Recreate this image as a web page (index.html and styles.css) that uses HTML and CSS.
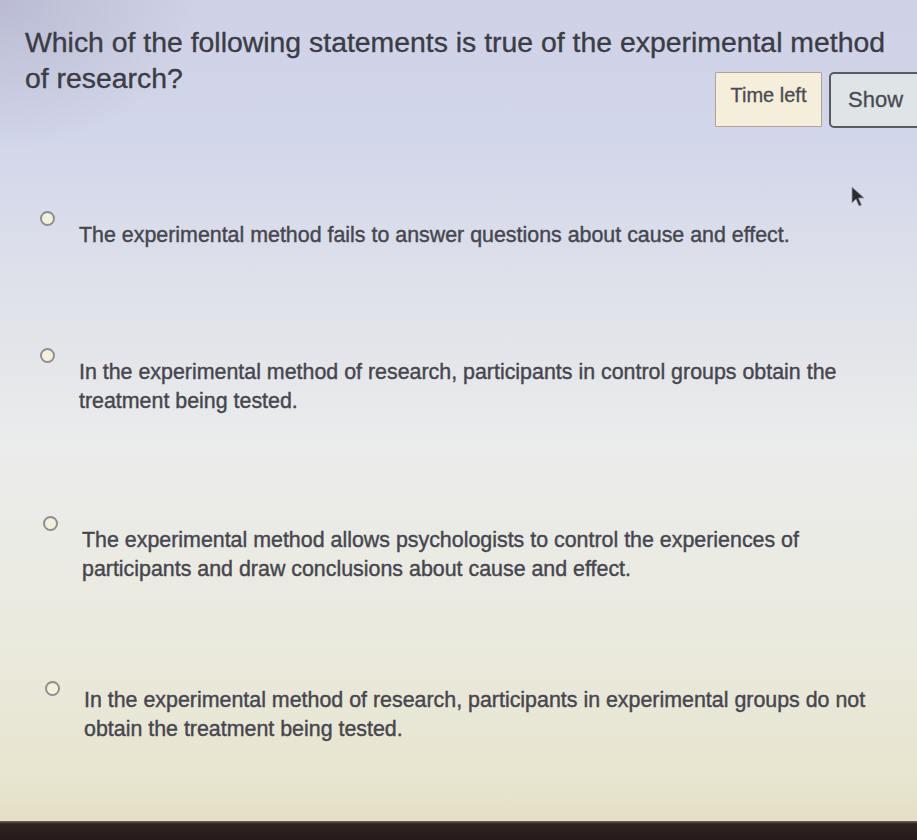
FILE: index.html
```html
<!DOCTYPE html>
<html lang="en">
<head>
<meta charset="utf-8">
<title>Question</title>
<link rel="stylesheet" href="styles.css">
</head>
<body>
<div class="screen">
  <main class="page">
    <header class="question">
      <h1 class="prompt"><span class="prompt-line prompt-line1">Which of the following statements is true of the experimental method</span> <span class="prompt-line prompt-line2">of research?</span></h1>
      <div class="toolbar">
        <button class="btn btn-time" type="button">Time left</button>
        <button class="btn btn-show" type="button">Show</button>
      </div>
    </header>
    <ul class="options">
      <li class="option">
        <span class="radio"></span>
        <span class="option-text">The experimental method fails to answer questions about cause and effect.</span>
      </li>
      <li class="option">
        <span class="radio"></span>
        <span class="option-text">In the experimental method of research, participants in control groups obtain the treatment being tested.</span>
      </li>
      <li class="option option-shift1">
        <span class="radio"></span>
        <span class="option-text">The experimental method allows psychologists to control the experiences of participants and draw conclusions about cause and effect.</span>
      </li>
      <li class="option option-shift2">
        <span class="radio"></span>
        <span class="option-text">In the experimental method of research, participants in experimental groups do not obtain the treatment being tested.</span>
      </li>
    </ul>
    <svg class="cursor" width="16" height="22" viewBox="0 0 16 22" aria-hidden="true">
      <path d="M1 1 L1 17 L5 13 L8 20 L10.5 19 L7.5 12 L13 12 Z" fill="#2b2b30" stroke="#9a9aa4" stroke-width="0.8"/>
    </svg>
  </main>
  <div class="bezel"></div>
</div>
</body>
</html>
```
FILE: styles.css
```css
* { box-sizing: border-box; }
html, body {
  margin: 0;
  padding: 0;
  width: 917px;
  height: 840px;
  overflow: hidden;
}
body {
  font-family: "Liberation Sans", Arial, sans-serif;
  color: #45454f;
}
.screen {
  width: 917px;
  height: 840px;
  display: flex;
  flex-direction: column;
  overflow: hidden;
}
.page {
  position: relative;
  flex: 1;
  background:
    radial-gradient(ellipse 200px 150px at 0 0, rgba(165,165,192,0.5), rgba(165,165,192,0) 100%),
    linear-gradient(180deg, #cfd2e6 0px, #d2d6ea 140px, #e0e2ea 300px, #ebeceb 450px, #eaeadf 620px, #e8e5cf 780px, #e4dfc6 821px);
  padding: 0 0 0 25px;
}
.question {
  padding-top: 24px;
  display: grid;
  grid-template-columns: 1fr auto;
  align-items: start;
}
.prompt {
  display: contents;
  font-size: 28.4px;
  font-weight: normal;
}
.prompt-line {
  display: block;
  line-height: 36px;
  color: #3c3c44;
  -webkit-text-stroke: 0.35px #3c3c44;
  white-space: nowrap;
}
.prompt-line1 {
  grid-column: 1 / -1;
  grid-row: 1;
}
.prompt-line2 {
  grid-column: 1;
  grid-row: 2;
  justify-self: start;
}
.toolbar {
  grid-column: 2;
  grid-row: 2;
  display: flex;
  gap: 7px;
  margin-top: 12px;
  margin-right: -12px;
}
.btn {
  font-family: "Liberation Sans", Arial, sans-serif;
  color: #4a4a52;
  -webkit-text-stroke: 0.3px #4a4a52;
  padding: 0;
  margin: 0;
  cursor: default;
  flex: none;
}
.btn-time {
  width: 107px;
  height: 55px;
  background: #f4eedb;
  border: 1.5px solid #b3a395;
  border-radius: 1px;
  font-size: 20px;
  padding-bottom: 8px;
}
.btn-show {
  width: 100px;
  height: 56px;
  background: #dfe4e6;
  border: 2px solid #5a5a60;
  border-radius: 5px;
  font-size: 22px;
  text-align: left;
  padding-left: 17px;
}
.options {
  list-style: none;
  margin: 83px 0 0 15px;
  padding: 0;
  display: flex;
  flex-direction: column;
}
.option {
  display: flex;
  align-items: flex-start;
  gap: 24px;
}
.option + .option { margin-top: 98px; }
.option-shift1 { padding-left: 3px; }
.option-shift2 { padding-left: 5px; }
.option + .option-shift1 { margin-top: 100px; }
.option + .option-shift2 { margin-top: 97px; }
.option-shift2 .option-text { margin-top: 5px; }
.radio {
  flex: none;
  width: 15px;
  height: 15px;
  border-radius: 50%;
  border: 2px solid #8e8e92;
  background: #f3f0dc;
}
.option-text {
  margin-top: 10px;
  font-size: 21.4px;
  line-height: 29px;
  max-width: 792px;
  color: #46464f;
  -webkit-text-stroke: 0.4px #46464f;
}
.cursor {
  position: absolute;
  left: 851px;
  top: 186px;
}
.bezel {
  height: 19px;
  flex: none;
  background: linear-gradient(180deg, #6e6560 0px, #2e2220 3px, #271c1b 100%);
}
```
